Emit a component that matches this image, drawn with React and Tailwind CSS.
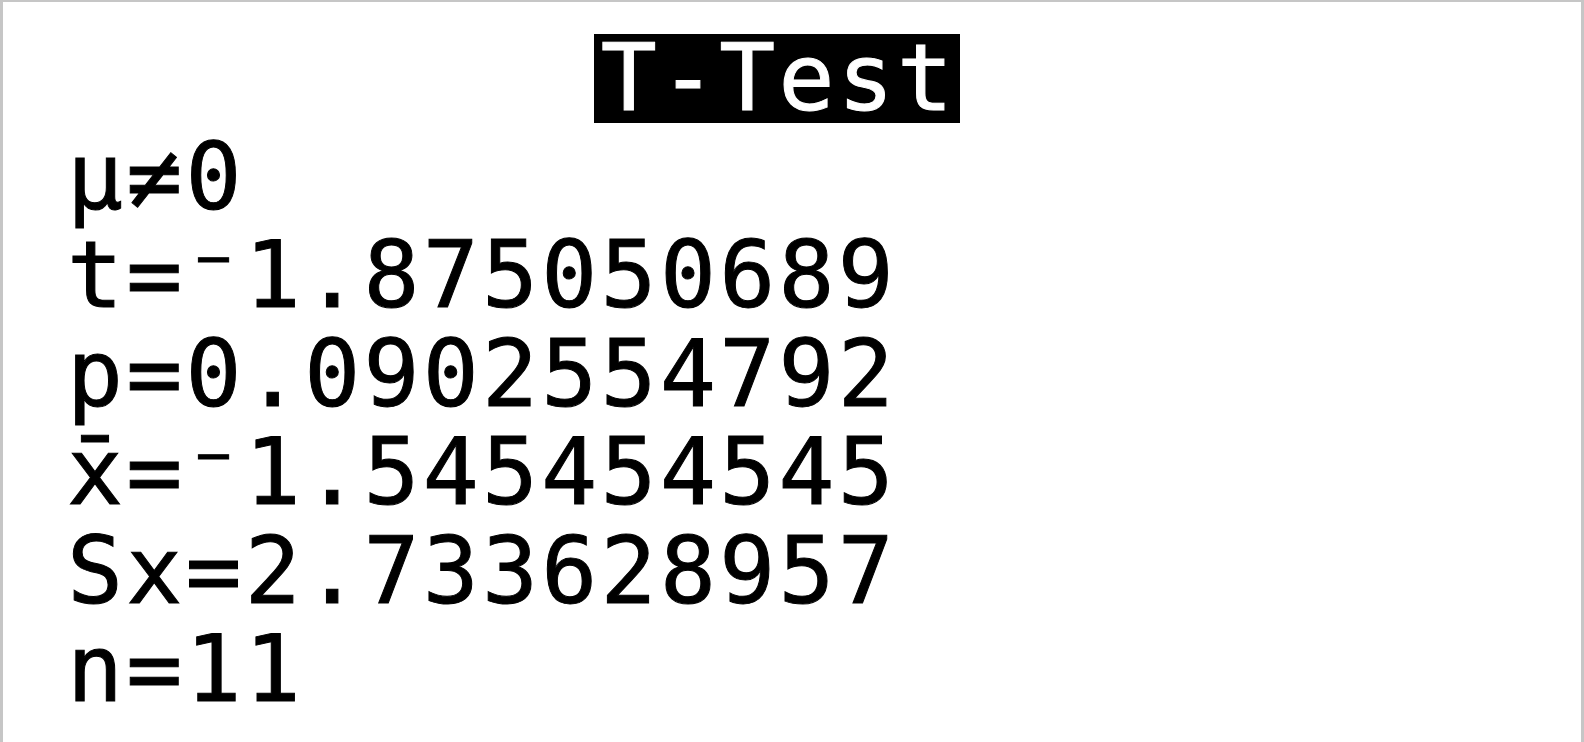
export default function App() {
  const rows = [
    "μ≠0",
    "t=⁻1.875050689",
    "p=0.0902554792",
    "x̄=⁻1.545454545",
    "Sx=2.733628957",
    "n=11",
  ];
  const mono = { fontFamily: '"DejaVu Sans Mono", "Liberation Mono", monospace' };
  return (
    <div className="w-full h-[742px] bg-white border-t-2 border-l-[3px] border-r-[3px] border-[#c6c6c6] overflow-hidden text-black" style={mono}>
      {/* inverse-video title bar */}
      <div className="flex justify-center pr-[30px] pt-[32px]">
        <div className="w-[366px] h-[89px] bg-black text-white flex items-center justify-center text-[93px] tracking-[3.3px] leading-none pl-[3px] [-webkit-text-stroke:1px_white]">
          T-Test
        </div>
      </div>
      {/* result lines */}
      <div className="pl-[64px] pt-[5px] text-[93px] leading-[98.4px] tracking-[3.3px] [-webkit-text-stroke:1px_black]">
        {rows.map((r) => (
          <div key={r} className="whitespace-pre">{r}</div>
        ))}
      </div>
    </div>
  );
}
